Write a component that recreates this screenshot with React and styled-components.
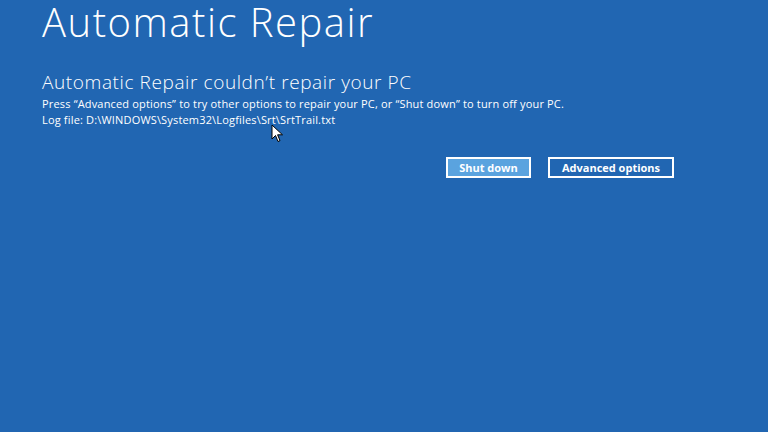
import React from 'react'
import styled, { createGlobalStyle } from 'styled-components'

const Global = createGlobalStyle`
    html, body {
        margin: 0;
        padding: 0;
        background: #2166b2;
    }
    #root {
        height: 432px;
    }
`

const Screen = styled.div`
    position: relative;
    width: 768px;
    height: 432px;
    background: #2166b2;
    color: #ffffff;
    font-family: "Open Sans", "Noto Sans", sans-serif;
    padding: 2px 0 0 42px;
    box-sizing: border-box;
    overflow: hidden;
`

const Title = styled.h1`
    margin: 0;
    font-size: 40px;
    font-weight: 300;
    line-height: 40px;
    letter-spacing: 1.5px;
`

const Heading = styled.h2`
    margin: 28px 0 0 0;
    font-size: 19px;
    font-weight: 300;
    line-height: 24px;
    letter-spacing: 0.6px;
`

const Line = styled.p`
    margin: ${p => p.gap || 0}px 0 0 0;
    font-size: 11px;
    line-height: 16px;
    letter-spacing: 0.17px;
`

const Actions = styled.div`
    display: flex;
    gap: 17px;
    padding: 29px 0 0 404px;
`

const Button = styled.button`
    width: ${p => p.w}px;
    height: 21px;
    padding: 0;
    border: 2px solid #ffffff;
    background: ${p => p.primary ? '#5aa3df' : '#2166b2'};
    color: #ffffff;
    font-family: "Open Sans", "Noto Sans", sans-serif;
    font-size: 11px;
    font-weight: 700;
    box-sizing: border-box;
    cursor: default;
`

const Pointer = styled.svg`
    position: absolute;
    left: 271px;
    top: 124px;
`

export default function App() {
    return (
        <>
            <Global />
            <Screen>
                <Title>Automatic Repair</Title>
                <Heading>Automatic Repair couldn’t repair your PC</Heading>
                <Line gap={2}>Press “Advanced options” to try other options to repair your PC, or “Shut down” to turn off your PC.</Line>
                <Line>Log file: D:\WINDOWS\System32\Logfiles\Srt\SrtTrail.txt</Line>
                <Actions>
                    <Button primary w={85}>Shut down</Button>
                    <Button w={126}>Advanced options</Button>
                </Actions>
                <Pointer width="14" height="20" viewBox="0 0 14 20">
                    <path d="M1 1 L1 15 L4.5 11.5 L7 17.5 L9 16.6 L6.6 10.8 L11.5 10.8 Z" fill="#ffffff" stroke="#000000" strokeWidth="1" strokeLinejoin="round" />
                </Pointer>
            </Screen>
        </>
    )
}
